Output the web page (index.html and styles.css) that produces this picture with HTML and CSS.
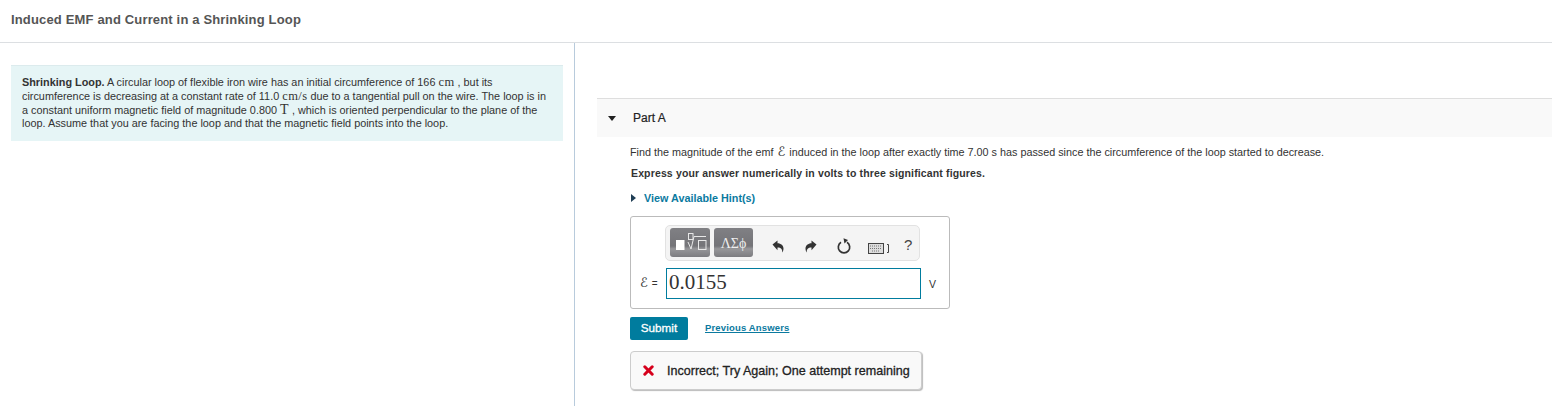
FILE: index.html
```html
<!DOCTYPE html>
<html lang="en">
<head>
    <meta charset="UTF-8">
    <title>Induced EMF and Current in a Shrinking Loop</title>
    <link rel="stylesheet" href="styles.css">
</head>
<body>

    <!-- Title bar -->
    <header class="page-title">
        <h1>Induced EMF and Current in a Shrinking Loop</h1>
    </header>

    <div class="columns">

        <!-- Problem intro -->
        <aside class="left-pane">
            <div class="intro">
                <b>Shrinking Loop.</b> A circular loop of flexible iron wire has an initial circumference of 166 <span class="math">cm</span> , but its<br>
                circumference is decreasing at a constant rate of 11.0 <span class="math">cm/s</span> due to a tangential pull on the wire. The loop is in<br>
                a constant uniform magnetic field of magnitude 0.800 <span class="math big">T</span> , which is oriented perpendicular to the plane of the<br>
                loop. Assume that you are facing the loop and that the magnetic field points into the loop.
            </div>
        </aside>

        <!-- Part A -->
        <main class="right-pane">
            <div class="part-head">
                <span class="arrow-down"></span>
                <span class="part-name">Part A</span>
            </div>

            <div class="part-body">
                <p class="question">Find the magnitude of the emf <span class="script-e">ℰ</span> induced in the loop after exactly time 7.00 s has passed since the circumference of the loop started to decrease.</p>
                <p class="instruction">Express your answer numerically in volts to three significant figures.</p>

                <div class="hints">
                    <span class="arrow-right"></span>
                    <a href="#" class="hint-link">View Available Hint(s)</a>
                </div>

                <div class="answer-box">
                    <div class="toolbar">
                        <div class="tool-btn templates">
                            <svg width="40" height="29" viewBox="0 0 40 29">
                                <rect x="6" y="12" width="8.500" height="10" fill="#fff"/>
                                <rect x="18.500" y="5.500" width="4.500" height="6" fill="none" stroke="#e8e8e8"/>
                                <path d="M18 14l3 7 3-12.500h12" fill="none" stroke="#e8e8e8"/>
                                <rect x="28.500" y="12.500" width="7.500" height="9" fill="none" stroke="#e8e8e8"/>
                            </svg>
                        </div>
                        <div class="tool-btn symbols">ΛΣϕ</div>

                        <svg class="tool-icon undo" width="12" height="13" viewBox="0 0 12 13">
                            <path d="M0.500 4.500L5.500 0.500v2.700c3.500 0 6 2.300 6 5.300 0 1.500-0.500 3-1.300 4 0.300-3.200-1.200-5-4.700-5v2.700z" fill="#333"/>
                        </svg>
                        <svg class="tool-icon redo" width="12" height="13" viewBox="0 0 12 13">
                            <path d="M11.500 4.500L6.500 0.500v2.700c-3.500 0-6 2.300-6 5.300 0 1.500 0.500 3 1.300 4-0.300-3.200 1.200-5 4.700-5v2.700z" fill="#333"/>
                        </svg>
                        <svg class="tool-icon reset" width="14" height="16" viewBox="0 0 14 16">
                            <path d="M4 4.300a5.700 5.700 0 1 0 6 0" fill="none" stroke="#333" stroke-width="1.700"/>
                            <path d="M6.500 0.300l4.500 1.700-3.500 3.500z" fill="#333"/>
                        </svg>
                        <svg class="tool-icon keyboard" width="22" height="11" viewBox="0 0 22 11">
                            <rect x="0.500" y="0.500" width="15" height="10" fill="#ddd" stroke="#444"/>
                            <path d="M2 3h12M2 5.500h12M4 8h8" stroke="#777" stroke-dasharray="1 1"/>
                            <path d="M19 1.500h1.500v8H19" fill="none" stroke="#444"/>
                        </svg>
                        <span class="tool-help">?</span>
                    </div>

                    <div class="answer-row">
                        <span class="answer-label"><span class="script-e">ℰ</span> =</span>
                        <div class="answer-input">0.0155</div>
                        <span class="answer-unit">V</span>
                    </div>
                </div>

                <div class="actions">
                    <button class="submit-btn">Submit</button>
                    <a href="#" class="prev-link">Previous Answers</a>
                </div>

                <div class="feedback">
                    <svg width="11" height="11" viewBox="0 0 11 11">
                        <path d="M1.800 1.800l7.400 7.400M9.200 1.800l-7.400 7.400" stroke="#d6001c" stroke-width="3" stroke-linecap="round"/>
                    </svg>
                    <span>Incorrect; Try Again; One attempt remaining</span>
                </div>
            </div>
        </main>

    </div>

</body>
</html>
```

FILE: styles.css
```css
html, body {
    height: 100%;
}

body {
    margin: 0;
    font-family: 'Liberation Sans', Arial, sans-serif;
    color: #333;
    background: white;
    display: flex;
    flex-direction: column;
    overflow: hidden;
}

.page-title {
    height: 42px;
    border-bottom: 1px solid #dcdfe2;
    flex: none;
}

h1 {
    margin: 0;
    padding: 11px 0 0 11px;
    font-size: 13px;
    line-height: 17px;
    font-weight: bold;
    letter-spacing: 0.16px;
    color: #555;
}

.columns {
    display: flex;
    flex: 1;
}

.left-pane {
    width: 574px;
    border-right: 1px solid #b8cbdc;
    padding-top: 22px;
    flex: none;
}

.intro {
    width: 552px;
    margin-left: 11px;
    box-sizing: border-box;
    height: 76px;
    padding: 10px 0 0 11px;
    background: #e6f5f6;
    border-top: 1px solid #dcebed;
    font-size: 10.85px;
    line-height: 13.8px;
    color: #333;
}

.math {
    font-family: 'Liberation Serif', serif;
    font-size: 12.5px;
    line-height: 0;
    letter-spacing: 0.4px;
}

.math.big {
    font-size: 14px;
}

.right-pane {
    flex: 1;
    padding-top: 55px;
}

.part-head {
    height: 38px;
    background: #f9f9f9;
    border-top: 1px solid #dedede;
    margin-left: 22px;
    display: flex;
    align-items: center;
}

.arrow-down {
    width: 0;
    height: 0;
    margin-left: 11px;
    border-left: 4.5px solid transparent;
    border-right: 4.5px solid transparent;
    border-top: 5px solid #222;
}

.part-name {
    margin-left: 17px;
    font-size: 12px;
    color: #222;
    -webkit-text-stroke: 0.2px #222;
}

.part-body {
    margin-left: 55px;
}

.question {
    margin: 0;
    padding-top: 8px;
    font-size: 10.8px;
    line-height: 15px;
}

.script-e {
    font-family: 'Liberation Serif', 'DejaVu Sans', serif;
    font-size: 13px;
    line-height: 0;
    margin: 0 1px;
}

.instruction {
    margin: 6px 0 0;
    padding-left: 1px;
    font-size: 10.5px;
    line-height: 15px;
    font-weight: bold;
    letter-spacing: 0.14px;
}

.hints {
    margin-top: 9px;
    display: flex;
    align-items: center;
    height: 15px;
}

.arrow-right {
    width: 0;
    height: 0;
    margin-left: 1px;
    border-top: 4px solid transparent;
    border-bottom: 4px solid transparent;
    border-left: 5px solid #1f3e55;
}

.hint-link {
    margin-left: 8px;
    font-size: 10.8px;
    font-weight: bold;
    color: #0b7a9f;
    text-decoration: none;
}

.answer-box {
    width: 320px;
    height: 93px;
    box-sizing: border-box;
    margin-top: 11px;
    border: 1px solid #bbb;
    border-radius: 3px;
    padding-top: 8px;
}

.toolbar {
    width: 255px;
    height: 36px;
    box-sizing: border-box;
    margin-left: 34px;
    padding: 2px 0 0 4px;
    background: #f4f4f4;
    border: 1px solid #e2e2e2;
    border-radius: 5px;
    display: flex;
    align-items: flex-start;
}

.tool-btn {
    height: 29px;
    border-radius: 3px;
    background: linear-gradient(#808084 0, #747478 62%, #97979a 72%, #7c7c80 100%);
    color: #eee;
    flex: none;
}

.templates {
    width: 40px;
}

.templates svg {
    display: block;
}

.symbols {
    width: 39px;
    margin-left: 4px;
    font-family: 'Liberation Serif', serif;
    font-size: 14px;
    line-height: 31px;
    text-align: center;
}

.tool-icon {
    flex: none;
    margin-top: 12px;
}

.undo {
    margin-left: 19px;
}

.redo {
    margin-left: 21px;
}

.reset {
    margin-left: 20px;
    margin-top: 10px;
}

.keyboard {
    margin-left: 17px;
    margin-top: 15px;
}

.tool-help {
    margin-left: 14px;
    margin-top: 9px;
    font-size: 15px;
    line-height: 16px;
    color: #444;
}

.answer-row {
    display: flex;
    align-items: center;
    margin-top: 7px;
}

.answer-label {
    width: 35px;
    box-sizing: border-box;
    padding-left: 8px;
    font-size: 10px;
    white-space: nowrap;
}

.answer-input {
    width: 255px;
    height: 31px;
    box-sizing: border-box;
    border: 1px solid #007c9e;
    padding-left: 2px;
    font-family: 'Liberation Serif', serif;
    font-size: 21px;
    line-height: 26px;
    color: #333;
}

.answer-unit {
    margin-left: 8px;
    font-size: 10.5px;
}

.actions {
    margin-top: 8px;
    display: flex;
    align-items: center;
}

.submit-btn {
    width: 58px;
    height: 23px;
    padding: 0 0 2px;
    border: none;
    border-radius: 2px;
    background: #007c9e;
    color: white;
    font-family: inherit;
    font-size: 11.7px;
    -webkit-text-stroke: 0.3px white;
}

.prev-link {
    margin-left: 17px;
    margin-bottom: 2px;
    font-size: 9.5px;
    font-weight: bold;
    letter-spacing: 0.15px;
    color: #0b7a9f;
}

.feedback {
    width: 292px;
    height: 39px;
    margin-top: 11px;
    box-sizing: border-box;
    background: #f9f9f9;
    border: 1px solid #ccc;
    border-radius: 4px;
    box-shadow: 1px 1px 1px #bbb;
    display: flex;
    align-items: center;
    font-size: 12.55px;
    color: #222;
    -webkit-text-stroke: 0.3px #222;
}

.feedback svg {
    margin-left: 12px;
    margin-right: 13px;
    flex: none;
}

.feedback span {
    white-space: nowrap;
}
```
